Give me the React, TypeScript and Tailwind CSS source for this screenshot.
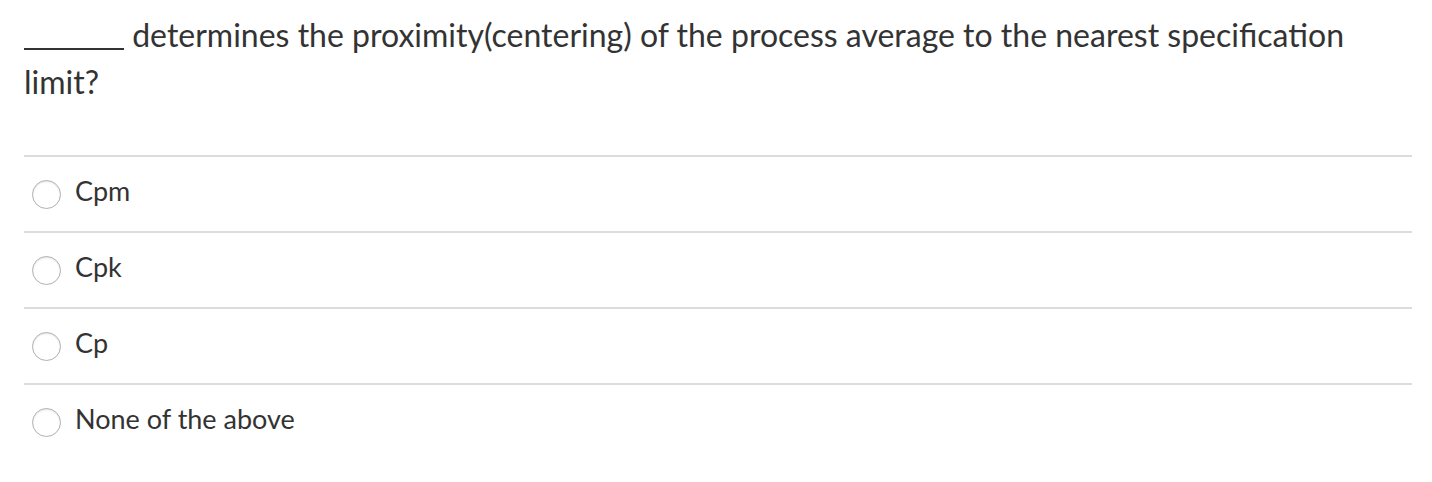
import React from "react";

const options = ["Cpm", "Cpk", "Cp", "None of the above"];

const App = () => {
  return (
    <div className="min-h-screen w-full bg-white pl-6 pr-5 text-[#333333] font-['Lato',sans-serif]">
      <p className="pt-[11px] text-[32px] leading-[47px]">
        <span className="inline-block w-[100px] border-b-2 border-[#333333] align-[-3px]" /> determines the proximity(centering) of the process average to the nearest specification limit?
      </p>
      <div className="mt-[50px]">
        {options.map((opt) => (
          <label
            key={opt}
            className="flex h-[76px] items-center border-t-2 border-[#dcdcdc] pl-2"
          >
            <span className="h-[29px] w-[29px] rounded-full border border-[#b0b0b0] bg-white shadow-[inset_0_1px_2px_rgba(0,0,0,0.1)]" />
            <span className="mb-[6px] ml-[14px] text-[27px]">{opt}</span>
          </label>
        ))}
      </div>
    </div>
  );
};

export default App;
